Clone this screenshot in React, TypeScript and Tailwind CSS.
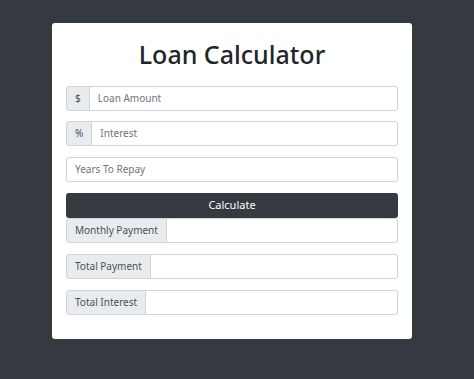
export default function App() {
  const font = { fontFamily: '"Noto Sans", "Open Sans", sans-serif' }

  return (
    <div className="min-h-screen w-full bg-[#343a40] pt-[23px] pl-[52px]" style={font}>
      <div className="w-[360px] h-[316px] bg-white rounded-[3px] px-[14px]">
        <h1 className="pt-[11px] h-[63px] text-center text-[25px] leading-[40px] font-medium text-[#212529]">
          Loan Calculator
        </h1>

        <div className="flex h-[25px] mb-[10px]">
          <span className="flex items-center px-[8px] bg-[#e9ecef] border border-[#ced4da] rounded-l-[3px] text-[10px] text-[#495057]">$</span>
          <input
            className="flex-1 min-w-0 px-[8px] border border-l-0 border-[#ced4da] rounded-r-[3px] text-[10px] text-[#495057] placeholder:text-[#6c757d] outline-none"
            placeholder="Loan Amount"
          />
        </div>

        <div className="flex h-[25px] mb-[11px]">
          <span className="flex items-center px-[8px] bg-[#e9ecef] border border-[#ced4da] rounded-l-[3px] text-[10px] text-[#495057]">%</span>
          <input
            className="flex-1 min-w-0 px-[8px] border border-l-0 border-[#ced4da] rounded-r-[3px] text-[10px] text-[#495057] placeholder:text-[#6c757d] outline-none"
            placeholder="Interest"
          />
        </div>

        <div className="flex h-[25px] mb-[11px]">
          <input
            className="flex-1 min-w-0 px-[8px] border border-[#ced4da] rounded-[3px] text-[10px] text-[#495057] placeholder:text-[#6c757d] outline-none"
            placeholder="Years To Repay"
          />
        </div>

        <button className="block w-full h-[25px] bg-[#343a40] text-white text-[11px] rounded-[3px]">
          Calculate
        </button>

        {['Monthly Payment', 'Total Payment', 'Total Interest'].map((label) => (
          <div key={label} className="flex h-[25px] mb-[11px]">
            <span className="flex items-center px-[8px] bg-[#e9ecef] border border-[#ced4da] rounded-l-[3px] text-[10px] text-[#495057]">
              {label}
            </span>
            <input className="flex-1 min-w-0 px-[8px] border border-l-0 border-[#ced4da] rounded-r-[3px] text-[10px] outline-none" />
          </div>
        ))}
      </div>
    </div>
  )
}
